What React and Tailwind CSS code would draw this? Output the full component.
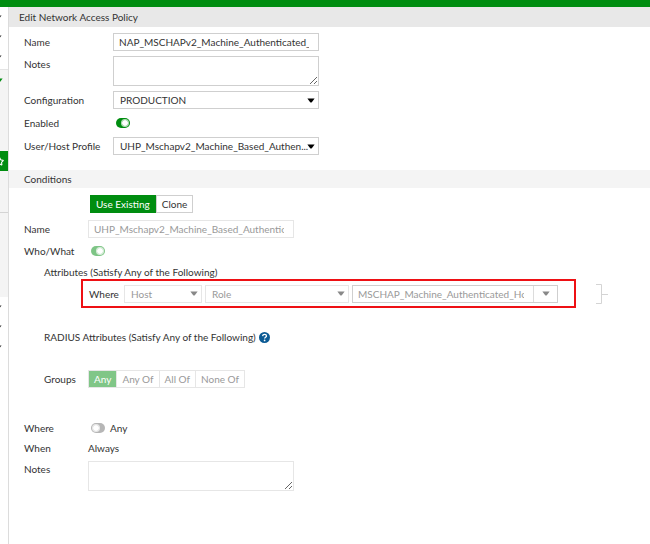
import { useState } from "react";
import { Star } from "lucide-react";

function Caret({ className = "" }) {
  return (
    <svg viewBox="0 0 8 5" className={`w-2 h-[5px] shrink-0 ${className}`} aria-hidden="true">
      <path d="M0.4 0.4H7.6L4.8 4.2Q4 5 3.2 4.2Z" fill="currentColor" />
    </svg>
  );
}

function Toggle({ id, checked, onChange, disabled }) {
  return (
    <input
      id={id}
      type="checkbox"
      checked={checked}
      onChange={onChange}
      disabled={disabled}
      className="relative appearance-none w-[14px] h-[10px] shrink-0 rounded-full bg-[#6f6f6f] checked:bg-[#008d10] disabled:opacity-50 before:absolute before:top-px before:left-px before:w-2 before:h-2 before:rounded-full before:border before:border-white/70 before:bg-white before:bg-clip-padding checked:before:left-[5px]"
    />
  );
}

function Select({ id, label, value, disabled, className }) {
  return (
    <div className={`relative flex items-center ${className}`}>
      <select
        id={id}
        aria-label={label}
        defaultValue={value}
        disabled={disabled}
        className="appearance-none w-full h-[18px] pl-[6px] bg-white border border-[#cfcfcf] text-[#333] disabled:border-[#e6e6e6] disabled:text-[#999] disabled:opacity-100"
      >
        <option>{value}</option>
      </select>
      <Caret
        className={`absolute right-1 pointer-events-none ${disabled ? "text-[#888]" : "text-black"}`}
      />
    </div>
  );
}

function Row({ id, label, top, labelWidth, children }) {
  return (
    <div className={`flex ${top ? "items-start" : "items-center"}`}>
      <label htmlFor={id} className={`shrink-0 ${labelWidth} ${top ? "pt-px" : ""}`}>
        {label}
      </label>
      {children}
    </div>
  );
}

function NavItem({ label, active }) {
  return (
    <button
      aria-label={label}
      className={`flex w-full h-5 items-center overflow-hidden ${active ? "text-[#008d10]" : "text-[#333]"}`}
    >
      <Caret className={active ? "-ml-[5px]" : "-ml-[6px]"} />
    </button>
  );
}

function Sidebar() {
  return (
    <nav className="w-2 shrink-0 overflow-hidden bg-white">
      <NavItem label="Dashboard" />
      <NavItem label="Users & Hosts" />
      <NavItem label="Network" />
      <div className="h-[228px] mt-[2px] bg-[#f4f4f4] border-t border-[#e4e4e4]">
        <NavItem label="Policy & Objects" active />
        <a
          href="#policy"
          aria-label="Network Access"
          className="flex h-5 mt-[61px] items-center overflow-hidden bg-[#008d10] text-white"
        >
          <Star className="w-[9px] h-[9px] -ml-[5px] shrink-0" strokeWidth={3} />
        </a>
        <div className="h-[42px] border-b border-[#d4d4d4]" />
      </div>
      <NavItem label="Logs" />
      <NavItem label="Portal" />
      <NavItem label="System" />
    </nav>
  );
}

const groupOptions = ["Any", "Any Of", "All Of", "None Of"];

export default function App() {
  const [enabled, setEnabled] = useState(true);
  const [mode, setMode] = useState("Use Existing");

  return (
    <div className="min-h-screen flex flex-col bg-white font-['Lato',sans-serif] text-[10px] leading-[14px] text-[#333]">
      <div className="h-[7px] bg-[#008d10]" />
      <div className="flex flex-1">
        <Sidebar />
        <main className="flex-1 min-w-0 border-l border-[#dcdcdc]">
          <h1 className="h-5 px-[10px] flex items-center bg-[#e8e8e8]">Edit Network Access Policy</h1>

          <div className="flex flex-col gap-[5px] px-[15px] py-[6px]">
            <Row id="name" label="Name" labelWidth="w-[89px]">
              <input
                id="name"
                defaultValue="NAP_MSCHAPv2_Machine_Authenticated_Hosts"
                className="w-[206px] h-[18px] pl-[5px] pr-[9px] border border-[#cfcfcf]"
              />
            </Row>
            <Row id="notes" label="Notes" top labelWidth="w-[89px]">
              <textarea id="notes" className="w-[206px] h-[30px] px-[5px] border border-[#cfcfcf]" />
            </Row>
            <Row id="configuration" label="Configuration" labelWidth="w-[89px]">
              <Select id="configuration" value="PRODUCTION" className="w-[206px]" />
            </Row>
            <div className="py-[2px]">
              <Row id="enabled" label="Enabled" labelWidth="w-[92px]">
                <Toggle id="enabled" checked={enabled} onChange={() => setEnabled(!enabled)} />
              </Row>
            </div>
            <Row id="profile" label="User/Host Profile" labelWidth="w-[89px]">
              <Select id="profile" value="UHP_Mschapv2_Machine_Based_Authen..." className="w-[206px]" />
            </Row>
          </div>

          <h2 className="h-[18px] mt-[9px] px-[15px] flex items-center bg-[#f4f4f4]">Conditions</h2>

          <div className="px-[15px] pt-[7px]">
            <div className="flex pl-[66px]">
              {["Use Existing", "Clone"].map((item) => (
                <button
                  key={item}
                  onClick={() => setMode(item)}
                  className={`h-[18px] px-[5px] border ${
                    mode === item ? "bg-[#008d10] border-[#008d10] text-white" : "bg-white border-[#cfcfcf]"
                  }`}
                >
                  {item}
                </button>
              ))}
            </div>

            <div className="flex flex-col gap-[6px] pt-[7px]">
              <Row id="profile-name" label="Name" labelWidth="w-[64px]">
                <input
                  id="profile-name"
                  disabled
                  defaultValue="UHP_Mschapv2_Machine_Based_Authentication"
                  className="w-[206px] h-[18px] pl-[5px] pr-[9px] border border-[#e6e6e6] text-[#999]"
                />
              </Row>
              <Row id="who" label="Who/What" labelWidth="w-[67px]">
                <Toggle id="who" checked disabled />
              </Row>
            </div>

            <h3 className="mt-[7px] pl-5">Attributes (Satisfy Any of the Following)</h3>
            <div className="flex items-center gap-5 pl-[57px]">
              <div className="flex flex-1 max-w-[495px] h-[29px] items-center gap-[3px] pl-[6px] pr-4 border-2 border-[#ee1014]">
                <label htmlFor="where-type" className="w-8">Where</label>
                <Select id="where-type" value="Host" disabled className="w-[78px]" />
                <Select label="Attribute" value="Role" disabled className="flex-1" />
                <div className="flex w-[206px] h-[18px] border border-[#cfcfcf]">
                  <input
                    aria-label="Role value"
                    disabled
                    defaultValue="MSCHAP_Machine_Authenticated_Hosts"
                    className="flex-1 min-w-0 pl-[5px] pr-[9px] text-[#999]"
                  />
                  <button aria-label="Open list" disabled className="w-6 flex items-center justify-center border-l border-[#dcdcdc] text-[#888]">
                    <Caret />
                  </button>
                </div>
              </div>
              <svg viewBox="0 0 12 20" className="w-3 h-5 shrink-0" fill="none" stroke="#d4d4d4" aria-hidden="true">
                <path d="M0 .5H5.5V19.5H0M5.5 10.5H12" />
              </svg>
            </div>

            <div className="flex items-center gap-[3px] mt-[22px] pl-5">
              <h3>RADIUS Attributes (Satisfy Any of the Following)</h3>
              <button aria-label="Help">
                <svg viewBox="0 0 22 22" className="w-[11px] h-[11px]" aria-hidden="true">
                  <circle cx="11" cy="11" r="11" fill="#0b5a94" />
                  <path d="M7.2 8.2C7.6 3.6 15 3.8 15 8C15 10.6 11.2 10.6 11.2 13.2" fill="none" stroke="#fff" strokeWidth="2.6" />
                  <circle cx="11.2" cy="16.8" r="1.7" fill="#fff" />
                </svg>
              </button>
            </div>

            <div className="flex items-center mt-[26px] pl-5">
              <span className="w-11">Groups</span>
              <div className="flex border border-[#e6e6e6] divide-x divide-[#e6e6e6]">
                {groupOptions.map((option) => (
                  <button
                    key={option}
                    disabled
                    className={`h-4 px-[5px] ${option === "Any" ? "bg-[#80c687] text-white" : "text-[#999]"}`}
                  >
                    {option}
                  </button>
                ))}
              </div>
            </div>

            <div className="flex flex-col gap-[6px] mt-[33px]">
              <Row id="location" label="Where" labelWidth="w-[67px]">
                <Toggle id="location" checked={false} disabled />
                <span className="pl-[5px]">Any</span>
              </Row>
              <div className="flex">
                <span className="w-[64px]">When</span>
                <span>Always</span>
              </div>
              <Row id="condition-notes" label="Notes" top labelWidth="w-[64px]">
                <textarea id="condition-notes" disabled className="w-[206px] h-[30px] px-[5px] border border-[#e6e6e6]" />
              </Row>
            </div>
          </div>
        </main>
      </div>
    </div>
  );
}
